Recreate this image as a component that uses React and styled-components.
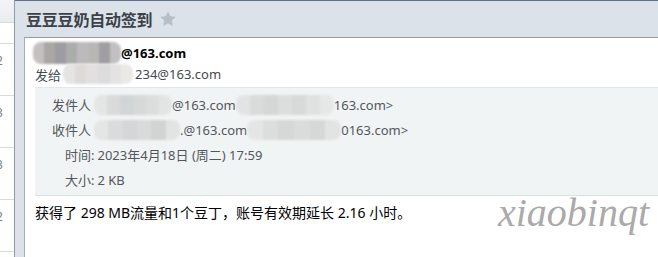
import React from "react"
import styled, { createGlobalStyle } from "styled-components"

const GlobalStyle = createGlobalStyle`
html, body {
    margin: 0;
    padding: 0;
    width: 658px;
    height: 257px;
    overflow: hidden;
    background: #ffffff;
    font-family: "Noto Sans", "Noto Sans CJK SC", sans-serif;
}
`

const sideRows = ["2", "3", "3", "2"]

function Mosaic(props) {
    const step = 100 / props.tones.length
    const stops = props.tones.map((c, i) => `${c} ${i * step}% ${(i + 1) * step}%`).join(", ")
    return <MosaicBox w={props.w} h={props.h} style={{ backgroundImage: `linear-gradient(to right, ${stops})` }} />
}

export default function App() {
    return (
        <Page>
            <GlobalStyle />
            <Sidebar>
                <SideTop />
                <SideGap />
                {sideRows.map((n, i) => <SideRow key={i}><span>{n}</span></SideRow>)}
            </Sidebar>
            <Main>
                <Header>
                    <Title>豆豆豆奶自动签到</Title>
                    <Star viewBox="0 0 24 24">
                        <path d="M12 1.5l3.2 6.7 7.3.9-5.4 5 1.4 7.3L12 17.8l-6.5 3.6 1.4-7.3-5.4-5 7.3-.9z" />
                    </Star>
                </Header>
                <Mail>
                    <FromLine>
                        <Mosaic w={88} h={22} tones={["#c4c0bf", "#aba7a6", "#9e9ba1", "#a9aeaa", "#bdbabb", "#b9b7b6", "#a09ea2", "#c2c0c0"]} />
                        <b>@163.com</b>
                    </FromLine>
                    <ToLine>
                        <span>发给</span>
                        <Mosaic w={70} h={20} tones={["#e6e3e3", "#dedada", "#e2dfe0", "#dcdcdc", "#e4e2e2", "#ebe8e8"]} />
                        <span>234@163.com</span>
                    </ToLine>
                    <Details>
                        <DetailRow indent={17}>
                            <Label>发件人</Label>
                            <Mosaic w={78} h={20} tones={["#e4e6e6", "#d9dbdb", "#d2d5d5", "#d7d9d9", "#dcdede", "#e3e5e5"]} />
                            <span>@163.com</span>
                            <Mosaic w={98} h={20} tones={["#e2e4e4", "#dadcdc", "#d5d7d7", "#dcdede", "#d8dada", "#e0e2e2", "#e6e8e8"]} />
                            <span>163.com&gt;</span>
                        </DetailRow>
                        <DetailRow indent={17}>
                            <Label>收件人</Label>
                            <Mosaic w={86} h={20} tones={["#e4e6e6", "#dadcdc", "#d4d7d7", "#d9dbdb", "#d2d4d4", "#e2e4e4"]} />
                            <span>.@163.com</span>
                            <Mosaic w={94} h={20} tones={["#e4e6e6", "#dcdede", "#d6d8d8", "#dadcdc", "#d6d8d8", "#e2e4e4"]} />
                            <span>0163.com&gt;</span>
                        </DetailRow>
                        <DetailRow indent={30}>
                            <Label>时间:</Label>
                            <span>2023年4月18日 (周二) 17:59</span>
                        </DetailRow>
                        <DetailRow indent={30}>
                            <Label>大小:</Label>
                            <span>2 KB</span>
                        </DetailRow>
                    </Details>
                    <Body>
                        <p>获得了 298 MB流量和1个豆丁，账号有效期延长 2.16 小时。</p>
                        <Watermark>xiaobinqt</Watermark>
                    </Body>
                </Mail>
            </Main>
        </Page>
    )
}

const Page = styled.div`
display: flex;
width: 658px;
height: 257px;
overflow: hidden;
`

const Sidebar = styled.div`
width: 14px;
flex-shrink: 0;
border-right: 1px solid #8e9aa7;
display: flex;
flex-direction: column;
overflow: hidden;
background: #ffffff;
`

const SideTop = styled.div`
height: 22px;
flex-shrink: 0;
background: linear-gradient(#f3f4f6, #e9ecef);
border-bottom: 1px solid #d5dae0;
`

const SideGap = styled.div`
height: 20px;
flex-shrink: 0;
border-bottom: 1px solid #d5dae0;
`

const SideRow = styled.div`
height: 52px;
flex-shrink: 0;
border-bottom: 1px solid #d5dae0;
font-size: 12px;
color: #7a8088;
line-height: 14px;
padding-top: 10px;
box-sizing: border-box;

span {
    display: block;
    margin-left: -4px;
}
`

const Main = styled.div`
flex: 1;
display: flex;
flex-direction: column;
background: #dbe2e9;
border-top: 1px solid #60728a;
min-width: 0;
`

const Header = styled.div`
height: 36px;
flex-shrink: 0;
display: flex;
align-items: center;
padding-left: 11px;
gap: 7px;
`

const Title = styled.h1`
margin: 0;
font-size: 16px;
font-weight: 700;
color: #3c4148;
letter-spacing: -0.2px;
`

const Star = styled.svg`
width: 18px;
height: 18px;
fill: #b9bec6;
`

const Mail = styled.div`
flex: 1;
margin-left: 9px;
background: #ffffff;
border-top: 1px solid #9c9c9c;
border-left: 1px solid #a6aeb6;
padding-left: 10px;
display: flex;
flex-direction: column;
`

const MosaicBox = styled.span`
display: inline-block;
width: ${props => props.w}px;
height: ${props => props.h}px;
border-radius: 8px;
filter: blur(1.2px);
vertical-align: middle;
`

const FromLine = styled.div`
display: flex;
align-items: center;
height: 22px;
margin-top: 4px;
margin-left: -2px;
font-size: 13px;
color: #000000;

b {
    font-weight: 700;
}
`

const ToLine = styled.div`
display: flex;
align-items: center;
height: 20px;
font-size: 13px;
color: #444a50;
gap: 2px;
`

const Details = styled.div`
margin-top: 3px;
height: 109px;
background: #f1f4f4;
border-top: 1px solid #e4e7e7;
border-bottom: 1px solid #dcdfdf;
padding-top: 4px;
box-sizing: border-box;
`

const DetailRow = styled.div`
display: flex;
align-items: center;
height: 25px;
padding-left: ${props => props.indent}px;
font-size: 13px;
color: #52575c;
white-space: nowrap;
`

const Label = styled.span`
margin-right: 3px;
`

const Body = styled.div`
display: flex;
align-items: flex-start;
justify-content: space-between;
padding-right: 9px;

p {
    margin: 6px 0 0;
    font-size: 14px;
    color: #000000;
}
`

const Watermark = styled.span`
font-family: "Liberation Serif", serif;
font-style: italic;
font-size: 40px;
color: #aaaaaa;
line-height: 40px;
margin-top: -3px;
`
